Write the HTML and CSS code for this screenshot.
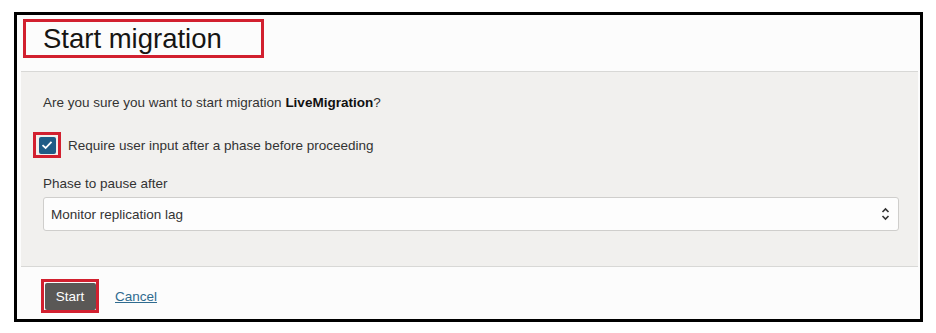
FILE: index.html
```html
<!DOCTYPE html>
<html lang="en">
<head>
    <meta charset="UTF-8">
    <title>Start migration</title>
    <link rel="stylesheet" href="styles.css">
</head>
<body>

    <div class="dialog">

        <div class="dialog-header">
            <h1 class="highlight title-box">Start migration</h1>
        </div>

        <div class="dialog-body">
            <p class="question">Are you sure you want to start migration <b>LiveMigration</b>?</p>

            <label class="check-row">
                <span class="highlight check-box">
                    <span class="checkbox">
                        <svg width="12" height="10" viewBox="0 0 12 10"><path d="M1.5 5.2 L4.6 8 L10.5 1.8" fill="none" stroke="#fff" stroke-width="1.8"/></svg>
                    </span>
                </span>
                Require user input after a phase before proceeding
            </label>

            <div class="field">
                <div class="field-label">Phase to pause after</div>
                <div class="select">
                    <span>Monitor replication lag</span>
                    <svg width="9" height="14" viewBox="0 0 9 14"><path d="M1.5 5 L4.5 2 L7.5 5 M1.5 9 L4.5 12 L7.5 9" fill="none" stroke="#333" stroke-width="1.6"/></svg>
                </div>
            </div>
        </div>

        <div class="dialog-footer">
            <span class="highlight btn-box"><button class="btn">Start</button></span>
            <a href="#" class="cancel">Cancel</a>
        </div>

    </div>

</body>
</html>
```

FILE: styles.css
```css
body {
    margin: 0;
    background: #fff;
    font-family: "Liberation Sans", Arial, sans-serif;
    color: #333;
}
.dialog {
    margin: 12px 13px 0 14px;
    height: 304px;
    border: 3px solid #000;
    padding: 0 2px 0 4px;
    background: #fcfcfc;
    display: flex;
    flex-direction: column;
}
.highlight {
    border: 3px solid #d2202f;
    box-sizing: border-box;
}
.dialog-header {
    height: 57px;
    padding: 4px 0 0 2px;
    box-sizing: border-box;
    border-bottom: 1px solid #d8d8d6;
}
.title-box {
    margin: 0;
    width: 241px;
    height: 39px;
    padding-left: 17px;
    font-weight: normal;
    font-size: 27.5px;
    line-height: 33px;
    color: #161513;
}
.dialog-body {
    background: #f1f0ee;
    padding: 0 19px 0 22px;
    height: 194px;
    border-bottom: 1px solid #d8d8d6;
}
.question {
    margin: 0;
    padding-top: 23px;
    font-size: 13.5px;
    line-height: 16px;
}
.question b {
    color: #111;
}
.check-row {
    display: flex;
    align-items: center;
    gap: 7px;
    margin: 21px 0 0 -10px;
    font-size: 13.5px;
}
.check-box {
    width: 28px;
    height: 26px;
    display: flex;
    align-items: center;
    justify-content: center;
}
.checkbox {
    width: 17px;
    height: 17px;
    border-radius: 2px;
    background: #1f5c86;
    display: flex;
    align-items: center;
    justify-content: center;
}
.field {
    margin-top: 18px;
}
.field-label {
    font-size: 13.5px;
    line-height: 16px;
    margin-bottom: 5px;
}
.select {
    height: 34px;
    box-sizing: border-box;
    border: 1px solid #cfcecc;
    border-radius: 3px;
    background: #fdfdfd;
    display: flex;
    align-items: center;
    justify-content: space-between;
    padding: 0 8px 0 7px;
    font-size: 13.5px;
}
.dialog-footer {
    flex: 1;
    display: flex;
    align-items: center;
    gap: 16px;
    padding-left: 20px;
}
.btn-box {
    width: 58px;
    height: 34px;
    display: flex;
    align-items: center;
    justify-content: center;
    margin-top: 6px;
}
.btn {
    width: 51px;
    height: 27px;
    border: none;
    border-radius: 2px;
    background: #5a5856;
    color: #fff;
    font-family: inherit;
    font-size: 13.5px;
    padding: 0;
}
.cancel {
    margin-top: 6px;
    color: #2f6b8f;
    font-size: 13.5px;
}
```
